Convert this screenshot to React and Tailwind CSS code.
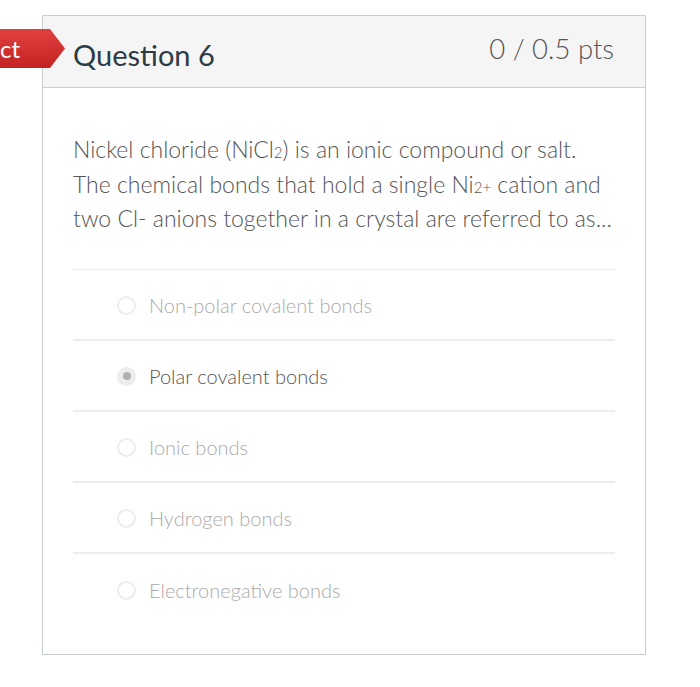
export default function App() {
  const options = [
    { label: "Non-polar covalent bonds", selected: false },
    { label: "Polar covalent bonds", selected: true },
    { label: "Ionic bonds", selected: false },
    { label: "Hydrogen bonds", selected: false },
    { label: "Electronegative bonds", selected: false },
  ];
  return (
    <div className="relative w-[700px] h-[687px] bg-white" style={{ fontFamily: "Lato, 'Open Sans', sans-serif" }}>
      <div className="absolute left-0 top-[29px] z-10 flex h-[39px] items-center">
        <div className="flex h-full w-[50px] items-center justify-end overflow-hidden bg-gradient-to-b from-[#e04040] to-[#c42222] text-[24px] leading-none text-white">
          <span className="pr-[30px]">ct</span>
        </div>
        <svg width="15" height="39" viewBox="0 0 15 39" className="block">
          <defs>
            <linearGradient id="g" x1="0" y1="0" x2="0" y2="1">
              <stop offset="0" stopColor="#e04040" />
              <stop offset="1" stopColor="#c42222" />
            </linearGradient>
          </defs>
          <polygon points="0,0 15,19.5 0,39" fill="url(#g)" />
        </svg>
      </div>
      <div className="pt-[15px] pl-[42px]">
        <div className="w-[604px] border border-[#c7cdd1]">
          <div className="flex h-[72px] items-center justify-between border-b border-[#c7cdd1] bg-[#f5f5f5] pl-[30px] pr-[31px]">
            <div className="text-[29px] text-[#2d3b45] mt-[6px]">Question 6</div>
            <div className="text-[27.5px] font-light text-[#555] -mt-[6px]">0 / 0.5 pts</div>
          </div>
          <div className="px-[30px] pt-[44px] pb-[29px]">
            <div className="text-[23px] font-light leading-[34.5px] text-[#555]">
              Nickel chloride (NiCl<span className="text-[15px] leading-[0]">2</span>) is an ionic compound or salt. The chemical bonds that hold a single Ni<span className="text-[15px] leading-[0]">2+</span> cation and two Cl- anions together in a crystal are referred to as...
            </div>
            <div className="mt-[33px] border-t border-[#ececec]">
              {options.map((o, i) => (
                <div
                  key={o.label}
                  className={`flex h-[71px] items-center pl-[44px] pt-[2px] ${i < options.length - 1 ? "border-b-2 border-[#ededed]" : ""}`}
                >
                  {o.selected ? (
                    <span className="flex h-[19px] w-[19px] items-center justify-center rounded-full bg-[#ededed]">
                      <span className="h-[8px] w-[8px] rounded-full bg-[#b0b0b0]" />
                    </span>
                  ) : (
                    <span className="h-[19px] w-[19px] rounded-full border-2 border-[#ededed]" />
                  )}
                  <span className={`ml-[13px] text-[20px] font-light ${o.selected ? "text-[#555]" : "text-[#aaa]"}`}>{o.label}</span>
                </div>
              ))}
            </div>
          </div>
        </div>
      </div>
    </div>
  );
}
